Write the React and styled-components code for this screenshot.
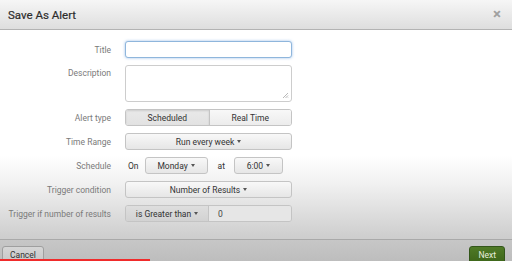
import styled, { createGlobalStyle } from 'styled-components';

const GlobalStyle = createGlobalStyle`
  html, body {
    margin: 0;
    padding: 0;
    height: 100%;
    overflow: hidden;
    font-family: Roboto, 'Liberation Sans', sans-serif;
  }
  #root {
    height: 100%;
  }
`;

const Modal = styled.div`
  position: relative;
  height: 261px;
  width: 512px;
  display: flex;
  flex-direction: column;
  background: #fff;
  overflow: hidden;
`;

const Header = styled.div`
  height: 30px;
  flex-shrink: 0;
  display: flex;
  align-items: center;
  justify-content: space-between;
  padding: 0 11px 0 8px;
  background: linear-gradient(#f6f6f6, #dedede);
  border-bottom: 1px solid #b3b3b3;
  box-sizing: border-box;
`;

const HeaderTitle = styled.h3`
  margin: 0;
  font-size: 11.5px;
  font-weight: 400;
  color: #2d2d2d;
  -webkit-text-stroke: 0.2px #2d2d2d;
`;

const Close = styled.span`
  font-size: 15px;
  font-weight: 700;
  color: #a0a0a0;
  line-height: 1;
`;

const Body = styled.div`
  flex: 1;
  background: linear-gradient(#fff 0px, #fff 125px, #f0f0f0 155px, #cecece 207px);
  padding-top: 11px;
  box-sizing: border-box;
`;

const Form = styled.div`
  display: grid;
  grid-template-columns: 111px 167px;
  column-gap: 14px;
  row-gap: 7px;
  align-items: center;
`;

const Label = styled.label`
  font-size: 8.5px;
  color: #7a7a7a;
  text-align: right;
  align-self: ${(p) => (p.$top ? 'start' : 'center')};
  padding-top: ${(p) => (p.$top ? '3px' : '0')};
`;

const TextInput = styled.div`
  height: 17px;
  box-sizing: border-box;
  border: 1px solid ${(p) => (p.$focus ? '#8fb6dc' : '#cdcdcd')};
  border-radius: 3px;
  background: #fff;
  box-shadow: ${(p) => (p.$focus ? '0 0 3px rgba(90,150,220,0.6)' : 'inset 0 1px 1px rgba(0,0,0,0.05)')};
`;

const TextArea = styled.div`
  position: relative;
  height: 37px;
  box-sizing: border-box;
  border: 1px solid #cdcdcd;
  border-radius: 3px;
  background: #fff;
`;

const Grip = styled.svg`
  position: absolute;
  right: 2px;
  bottom: 2px;
`;

const Segmented = styled.div`
  display: grid;
  grid-template-columns: 1fr 1fr;
  height: 17px;
  border: 1px solid #c4c4c4;
  border-radius: 3px;
  box-sizing: border-box;
  overflow: hidden;
`;

const Segment = styled.div`
  display: flex;
  align-items: center;
  justify-content: center;
  font-size: 8.5px;
  color: #333;
  background: ${(p) => (p.$active ? 'linear-gradient(#e9e9e9, #e2e2e2)' : 'linear-gradient(#f8f8f8, #ececec)')};
  box-shadow: ${(p) => (p.$active ? 'inset 0 1px 2px rgba(0,0,0,0.12)' : 'none')};
  & + & {
    border-left: 1px solid #c4c4c4;
  }
`;

const Dropdown = styled.div`
  display: flex;
  align-items: center;
  justify-content: center;
  gap: 3px;
  height: 17px;
  width: ${(p) => p.$width || 'auto'};
  box-sizing: border-box;
  border: 1px solid #c4c4c4;
  border-radius: 3px;
  background: linear-gradient(#f8f8f8, #e6e6e6);
  font-size: 8.5px;
  color: #333;
`;

const Caret = styled.span`
  width: 0;
  height: 0;
  border-left: 2.5px solid transparent;
  border-right: 2.5px solid transparent;
  border-top: 3px solid #555;
`;

const Inline = styled.div`
  display: flex;
  align-items: center;
`;

const Word = styled.span`
  font-size: 8.5px;
  color: #333;
  margin: ${(p) => p.$margin};
`;

const Combo = styled.div`
  display: grid;
  grid-template-columns: 83px 1fr;
  height: 17px;
  border: 1px solid #c4c4c4;
  border-radius: 3px;
  box-sizing: border-box;
  overflow: hidden;
`;

const ComboButton = styled.div`
  display: flex;
  align-items: center;
  justify-content: center;
  gap: 3px;
  background: linear-gradient(#dedede, #d2d2d2);
  border-right: 1px solid #c4c4c4;
  font-size: 8.5px;
  color: #333;
`;

const ComboValue = styled.div`
  display: flex;
  align-items: center;
  padding-left: 9px;
  background: #e6e6e6;
  font-size: 8.5px;
  color: #444;
`;

const Footer = styled.div`
  height: 22px;
  box-sizing: border-box;
  flex-shrink: 0;
  display: flex;
  justify-content: space-between;
  align-items: flex-start;
  padding: 6px 7px 0 2px;
  background: linear-gradient(#c7c7c7, #bdbdbd);
  border-top: 1px solid #a9a9a9;
`;

const Button = styled.button`
  height: 18px;
  flex-shrink: 0;
  padding: 0 ${(p) => (p.$primary ? '8px' : '7px')};
  font-family: inherit;
  font-size: 8.5px;
  border-radius: 3px;
  border: 1px solid ${(p) => (p.$primary ? '#33561a' : '#9f9f9f')};
  background: ${(p) => (p.$primary ? 'linear-gradient(#4f7a26, #3d6519)' : 'linear-gradient(#d6d6d6, #c6c6c6)')};
  color: ${(p) => (p.$primary ? '#e8eedf' : '#333')};
`;

const Progress = styled.div`
  position: absolute;
  left: 0;
  bottom: 0;
  width: 150px;
  height: 2px;
  background: #f02b2b;
`;

function App() {
  return (
    <Modal>
      <GlobalStyle />
      <Header>
        <HeaderTitle>Save As Alert</HeaderTitle>
        <Close>×</Close>
      </Header>
      <Body>
        <Form>
          <Label>Title</Label>
          <TextInput $focus />

          <Label $top>Description</Label>
          <TextArea>
            <Grip width="7" height="7" viewBox="0 0 7 7">
              <path d="M6 1 L1 6 M6 3.5 L3.5 6 M6 5.5 L5.5 6" stroke="#999" strokeWidth="0.7" />
            </Grip>
          </TextArea>

          <Label>Alert type</Label>
          <Segmented>
            <Segment $active>Scheduled</Segment>
            <Segment>Real Time</Segment>
          </Segmented>

          <Label>Time Range</Label>
          <Dropdown>
            Run every week <Caret />
          </Dropdown>

          <Label>Schedule</Label>
          <Inline>
            <Word $margin="0 6px 0 3px">On</Word>
            <Dropdown $width="63px">
              Monday <Caret />
            </Dropdown>
            <Word $margin="0 9px 0 10px">at</Word>
            <Dropdown $width="49px">
              6:00 <Caret />
            </Dropdown>
          </Inline>

          <Label>Trigger condition</Label>
          <Dropdown>
            Number of Results <Caret />
          </Dropdown>

          <Label>Trigger if number of results</Label>
          <Combo>
            <ComboButton>
              is Greater than <Caret />
            </ComboButton>
            <ComboValue>0</ComboValue>
          </Combo>
        </Form>
      </Body>
      <Footer>
        <Button>Cancel</Button>
        <Button $primary>Next</Button>
      </Footer>
      <Progress />
    </Modal>
  );
}

export default App;
